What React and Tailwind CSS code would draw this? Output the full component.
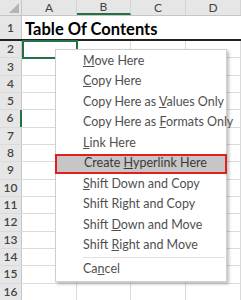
const cols = [
  { label: 'A', w: 'w-[55px]' },
  { label: 'B', w: 'w-[54px]' },
  { label: 'C', w: 'w-[55px]' },
  { label: 'D', w: 'w-[55px]' },
]

const rows = [1, 2, 3, 4, 5, 6, 7, 8, 9, 10, 11, 12, 13, 14, 15, 16]

const items = [
  ['', 'M', 'ove Here'],
  ['', 'C', 'opy Here'],
  ['Copy Here as ', 'V', 'alues Only'],
  ['Copy Here as ', 'F', 'ormats Only'],
  ['', 'L', 'ink Here'],
  ['Create ', 'H', 'yperlink Here', true],
  ['', 'S', 'hift Down and Copy'],
  ['Shif', 't', ' Right and Copy'],
  ['Shift ', 'D', 'own and Move'],
  ['Shift ', 'R', 'ight and Move'],
]

function App() {
  return (
    <div className="relative w-[241px] h-[300px] overflow-hidden bg-white font-['Lato',sans-serif]">
      {/* column headers */}
      <div className="flex h-[16px] bg-[#e6e6e6] border-b border-[#c6c6c6]">
        <div className="w-[22px] relative border-r border-[#c6c6c6]">
          <div className="absolute right-[2px] bottom-[2px] w-0 h-0 border-l-[10px] border-l-transparent border-b-[10px] border-b-[#b4b4b4]" />
        </div>
        {cols.map((c) => (
          <div
            key={c.label}
            className={`${c.w} flex items-center justify-center text-[12px] text-[#444] border-r border-[#d4d4d4] ${c.label === 'B' ? 'border-b-2 border-b-[#217346]' : ''}`}
          >
            {c.label}
          </div>
        ))}
      </div>

      {rows.map((r) => (
        <div key={r} className={`flex ${r === 1 ? 'h-[25px] border-b-2 border-b-[#222]' : 'h-[17.33px] border-b border-[#dadada]'}`}>
          <div
            className={`w-[22px] shrink-0 bg-[#e6e6e6] flex items-center justify-center text-[12px] font-semibold text-[#444] border-r border-[#c6c6c6] ${r === 6 ? 'border-r-2 border-r-[#217346]' : ''}`}
          >
            {r}
          </div>
          {r === 1 ? (
            <div className="flex-1 flex items-end pl-[3px] pb-[2px] text-[16.5px] font-bold text-black leading-none whitespace-nowrap">
              Table Of Contents
            </div>
          ) : (
            cols.map((c) => <div key={c.label} className={`${c.w} border-r border-[#dadada]`} />)
          )}
        </div>
      ))}

      {/* selected cell A2 */}
      <div className="absolute left-[22px] top-[40px] w-[56px] h-[19px] border-2 border-[#217346]" />

      {/* context menu */}
      <div className="absolute left-[55px] top-[49px] w-[172px] bg-white border border-[#cfcfcf] shadow-[2px_2px_3px_rgba(0,0,0,0.25)] py-[1px] text-[12.5px] text-[#505050] whitespace-nowrap">
        {items.map(([pre, key, post, hot], i) => (
          <div
            key={i}
            className={`h-[20.5px] flex items-center pl-[27px] ${hot ? 'bg-[#c6c6c6] border-2 border-[#e0201e] -mx-[1px] pl-[26px] text-[#3a3a3a]' : ''}`}
          >
            <span>
              {pre}
              <span className="underline underline-offset-[1px]">{key}</span>
              {post}
            </span>
          </div>
        ))}
        <div className="ml-[27px] mr-[1px] my-[1px] border-t border-[#e2e2e2]" />
        <div className="h-[21px] flex items-center pl-[27px]">
          <span>
            Ca<span className="underline underline-offset-[1px]">n</span>cel
          </span>
        </div>
      </div>
    </div>
  )
}

export default App
